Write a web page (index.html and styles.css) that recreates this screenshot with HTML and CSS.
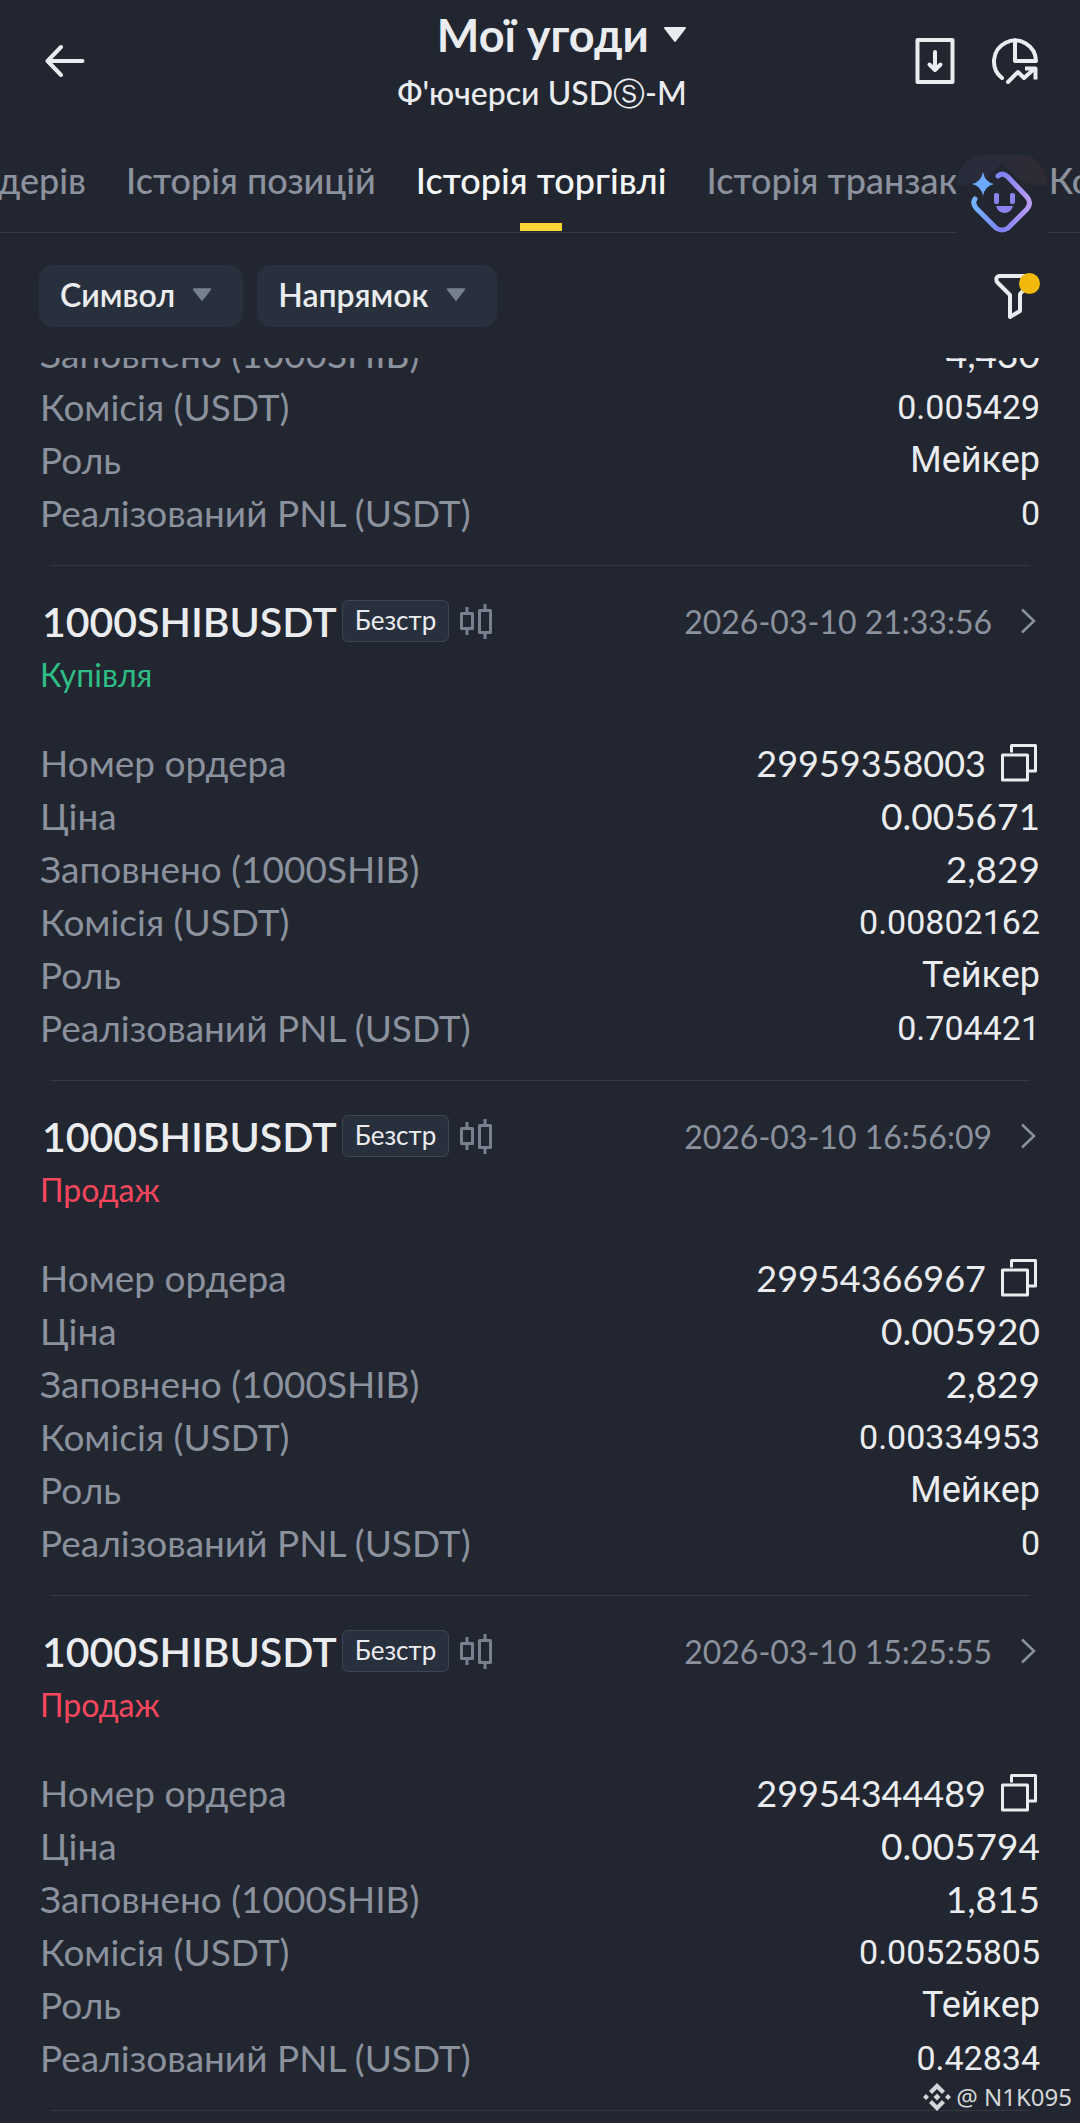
FILE: index.html
```html
<!DOCTYPE html>
<html lang="uk">
<head>
<meta charset="utf-8">
<meta name="viewport" content="width=device-width, initial-scale=1">
<title>Мої угоди</title>
<link rel="stylesheet" href="styles.css">
</head>
<body>
<svg class="sprite" aria-hidden="true">
  <symbol id="caret" viewBox="0 0 24 16"><path d="M2 1h20L12 14z" fill="currentColor" stroke="currentColor" stroke-width="2" stroke-linejoin="round"/></symbol>
  <symbol id="candles" viewBox="0 0 34 38"><g fill="none" stroke="currentColor" stroke-width="3" stroke-linejoin="round"><path d="M2.500 11.500h11v15h-11zM20.500 8.500h11v22h-11zM8 5v6M8 27v6M26 2v6M26 31v6"/></g></symbol>
  <symbol id="chevron" viewBox="0 0 16 26"><path d="M2 1.500L14 13 2 24.500" fill="none" stroke="currentColor" stroke-width="2.500"/></symbol>
  <symbol id="copy" viewBox="0 0 36 38"><g fill="none" stroke="currentColor" stroke-width="3" stroke-linejoin="round"><path d="M1.500 11h25v25h-25z"/><path d="M10.500 8.500v-7h24v25.500h-6.500"/></g></symbol>
</svg>
<div class="app">
  <header class="header">
    <button class="icon-button" type="button" aria-label="Назад">
      <svg width="40" height="34" viewBox="0 0 40 34"><path d="M37.500 17H3M16 3L2.500 17 16 31" fill="none" stroke="currentColor" stroke-width="4" stroke-linecap="round" stroke-linejoin="round"/></svg>
    </button>
    <div class="heading">
      <h1 class="heading-title"><button class="heading-button" type="button">Мої угоди <svg width="24" height="16"><use href="#caret"/></svg></button></h1>
      <p class="heading-sub">Ф'ючерси USDⓈ-M</p>
    </div>
    <div class="header-actions">
      <button class="icon-button" type="button" aria-label="Завантажити">
        <svg width="40" height="48" viewBox="0 0 40 48"><g fill="none" stroke="currentColor" stroke-width="4" stroke-linecap="round" stroke-linejoin="round"><path d="M2.500 3h35v42h-35z"/><path d="M20 15v18M14.500 27.500L20 33l5.500-5.500"/></g></svg>
      </button>
      <button class="icon-button" type="button" aria-label="Аналітика">
        <svg width="48" height="48" viewBox="0 0 48 48"><g fill="none" stroke="currentColor" stroke-width="4" stroke-linejoin="round"><path d="M11 41A21 21 0 1 1 45 24H24V3" stroke-linecap="round"/><path d="M17 45l10-10 6 6 10-9" stroke-linecap="round"/><path d="M34 31.500h10.500v11"/></g></svg>
      </button>
    </div>
  </header>

  <nav class="tabs" aria-label="Розділи">
    <a class="tab" href="#orders">Історія ордерів</a>
    <a class="tab" href="#positions">Історія позицій</a>
    <a class="tab tab-active" href="#trades" aria-current="page">Історія торгівлі</a>
    <a class="tab" href="#transactions">Історія транзакцій</a>
    <a class="tab" href="#copy-trading">Копітрейдинг</a>
  </nav>

  <button class="assistant" type="button" aria-label="Помічник">
    <svg width="92" height="88" viewBox="0 0 92 88">
      <defs>
        <linearGradient id="face" x1="0" y1="0" x2="1" y2="0"><stop offset="0" stop-color="#74b4fa"/><stop offset=".5" stop-color="#7f80f4"/><stop offset="1" stop-color="#b99cf2"/></linearGradient>
        <linearGradient id="cap" x1="0" y1="0" x2="1" y2="0"><stop offset="0" stop-color="#272c3a"/><stop offset=".5" stop-color="#2b2b3a"/><stop offset="1" stop-color="#2d2a32"/></linearGradient>
      </defs>
      <path d="M0 31C3 12 12 1 26 1H66C80 1 89 12 92 31Q75 33 62 25L46 9 30 25Q16 33 0 31z" fill="url(#cap)"/>
      <path d="M42 22Q47 18 52 23L71 43Q76 49 71 55L52 74Q46 78 40 74L20 54Q16 49 19 45" fill="none" stroke="url(#face)" stroke-width="5" stroke-linecap="round" stroke-linejoin="round"/>
      <path d="M27 18Q29 28 38 30Q29 32 27 42Q25 32 16 30Q25 28 27 18z" fill="#6aa9fb"/>
      <rect x="38" y="39" width="5" height="11" rx="2" fill="#8b82ee"/><rect x="54" y="39" width="5" height="11" rx="2" fill="#8b82ee"/>
      <path d="M40 52h17Q55 59 48.500 59T40 52z" fill="#8b82ee"/>
    </svg>
  </button>

  <div class="filters">
    <button class="chip" type="button">Символ <svg width="20" height="14"><use href="#caret"/></svg></button>
    <button class="chip" type="button">Напрямок <svg width="20" height="14"><use href="#caret"/></svg></button>
    <button class="icon-button filter-button" type="button" aria-label="Фільтр">
      <svg width="50" height="50" viewBox="0 0 50 50"><path d="M8 5H39Q43 6 40 11L29 23V40L19 46V24L6 11Q4 6 8 5z" fill="none" stroke="currentColor" stroke-width="4" stroke-linejoin="round"/><circle cx="38.500" cy="12.500" r="10.500" fill="#f0b90b"/></svg>
    </button>
  </div>

  <main class="list">
    <article class="card card-scrolled">
      <dl class="rows">
        <div class="row"><dt>Заповнено (1000SHIB)</dt><dd>4,430</dd></div>
        <div class="row"><dt>Комісія (USDT)</dt><dd class="narrow">0.005429</dd></div>
        <div class="row"><dt>Роль</dt><dd class="role">Мейкер</dd></div>
        <div class="row"><dt>Реалізований PNL (USDT)</dt><dd class="narrow">0</dd></div>
      </dl>
    </article>

    <article class="card">
      <div class="card-head">
        <h2 class="symbol">1000SHIBUSDT</h2><span class="badge">Безстр</span><svg class="candles" width="34" height="38"><use href="#candles"/></svg>
        <a class="details" href="#trade-1"><time datetime="2026-03-10T21:33:56">2026-03-10 21:33:56</time><svg width="16" height="26"><use href="#chevron"/></svg></a>
      </div>
      <p class="side side-buy">Купівля</p>
      <dl class="rows">
        <div class="row"><dt>Номер ордера</dt><dd class="order-id">29959358003 <button class="copy" type="button" aria-label="Копіювати"><svg width="36" height="38"><use href="#copy"/></svg></button></dd></div>
        <div class="row"><dt>Ціна</dt><dd>0.005671</dd></div>
        <div class="row"><dt>Заповнено (1000SHIB)</dt><dd>2,829</dd></div>
        <div class="row"><dt>Комісія (USDT)</dt><dd class="narrow">0.00802162</dd></div>
        <div class="row"><dt>Роль</dt><dd class="role">Тейкер</dd></div>
        <div class="row"><dt>Реалізований PNL (USDT)</dt><dd class="narrow">0.704421</dd></div>
      </dl>
    </article>

    <article class="card">
      <div class="card-head">
        <h2 class="symbol">1000SHIBUSDT</h2><span class="badge">Безстр</span><svg class="candles" width="34" height="38"><use href="#candles"/></svg>
        <a class="details" href="#trade-2"><time datetime="2026-03-10T16:56:09">2026-03-10 16:56:09</time><svg width="16" height="26"><use href="#chevron"/></svg></a>
      </div>
      <p class="side side-sell">Продаж</p>
      <dl class="rows">
        <div class="row"><dt>Номер ордера</dt><dd class="order-id">29954366967 <button class="copy" type="button" aria-label="Копіювати"><svg width="36" height="38"><use href="#copy"/></svg></button></dd></div>
        <div class="row"><dt>Ціна</dt><dd>0.005920</dd></div>
        <div class="row"><dt>Заповнено (1000SHIB)</dt><dd>2,829</dd></div>
        <div class="row"><dt>Комісія (USDT)</dt><dd class="narrow">0.00334953</dd></div>
        <div class="row"><dt>Роль</dt><dd class="role">Мейкер</dd></div>
        <div class="row"><dt>Реалізований PNL (USDT)</dt><dd class="narrow">0</dd></div>
      </dl>
    </article>

    <article class="card">
      <div class="card-head">
        <h2 class="symbol">1000SHIBUSDT</h2><span class="badge">Безстр</span><svg class="candles" width="34" height="38"><use href="#candles"/></svg>
        <a class="details" href="#trade-3"><time datetime="2026-03-10T15:25:55">2026-03-10 15:25:55</time><svg width="16" height="26"><use href="#chevron"/></svg></a>
      </div>
      <p class="side side-sell">Продаж</p>
      <dl class="rows">
        <div class="row"><dt>Номер ордера</dt><dd class="order-id">29954344489 <button class="copy" type="button" aria-label="Копіювати"><svg width="36" height="38"><use href="#copy"/></svg></button></dd></div>
        <div class="row"><dt>Ціна</dt><dd>0.005794</dd></div>
        <div class="row"><dt>Заповнено (1000SHIB)</dt><dd>1,815</dd></div>
        <div class="row"><dt>Комісія (USDT)</dt><dd class="narrow">0.00525805</dd></div>
        <div class="row"><dt>Роль</dt><dd class="role">Тейкер</dd></div>
        <div class="row"><dt>Реалізований PNL (USDT)</dt><dd class="narrow">0.42834</dd></div>
      </dl>
    </article>
  </main>

  <p class="watermark">
    <svg width="28" height="28" viewBox="0 0 28 28" aria-hidden="true"><path d="M14 0l8 8-3 3-5-5-5 5-3-3zM14 28l8-8-3-3-5 5-5-5-3 3zM3 11l3 3-3 3-3-3zM25 11l3 3-3 3-3-3zM14 10.500l3.500 3.500-3.500 3.500-3.500-3.500z" fill="currentColor"/></svg>
    @ N1K095
  </p>
</div>
</body>
</html>
```

FILE: styles.css
```css
* { box-sizing: border-box; }

body {
  margin: 0;
  background: #222630;
  color: #eaecef;
  font-family: Lato, Roboto, sans-serif;
  font-size: 36px;
}

h1, h2, p, dl, dd { margin: 0; }
svg { display: block; flex: none; }
.sprite { position: absolute; width: 0; height: 0; }

button {
  padding: 0;
  border: 0;
  background: none;
  color: inherit;
  font: inherit;
}

a { color: inherit; text-decoration: none; }

.app { position: relative; overflow: hidden; }

.header {
  display: grid;
  grid-template-columns: 1fr auto 1fr;
  align-items: center;
  height: 117px;
  padding: 0 41px 0 45px;
}

.icon-button { display: block; }
.heading { align-self: start; padding-top: 6px; text-align: center; }
.heading-title { font-size: 45px; font-weight: 700; line-height: 58px; }
.heading-button { display: flex; align-items: center; gap: 14px; margin-left: auto; }
.heading-sub { font-size: 32px; font-weight: 500; line-height: 58px; }
.header-actions { display: flex; justify-content: flex-end; gap: 36px; }

.tabs {
  display: flex;
  gap: 40px;
  height: 116px;
  padding-top: 36px;
  border-bottom: 1px solid #333843;
  white-space: nowrap;
  color: #8b919d;
  font-weight: 500;
}

.tab { position: relative; flex: none; line-height: 54px; }
.tab:first-child { margin-left: -163px; }
.tab-active { color: #f5f6f8; }

.tab-active::after {
  content: "";
  position: absolute;
  bottom: 1px;
  left: 50%;
  width: 42px;
  height: 8px;
  margin-left: -21px;
  background: #fcd535;
}

.assistant {
  position: absolute;
  top: 154px;
  right: 32px;
  background: #222630;
}

.filters {
  display: flex;
  align-items: center;
  gap: 14px;
  height: 125px;
  padding: 0 39px;
}

.chip {
  display: flex;
  align-items: center;
  gap: 17px;
  height: 62px;
  padding: 0 31px 2px 21px;
  border-radius: 14px;
  background: #29303d;
  font-size: 32px;
  font-weight: 600;
}

.chip svg { color: #76808f; }
.filter-button { margin-left: auto; }

.list { overflow: hidden; padding: 0 40px 12px; }
.card { position: relative; padding: 34px 0 27px; }
.card-scrolled { margin-top: -31px; padding-top: 0; }

.card::after {
  content: "";
  position: absolute;
  right: 10px;
  bottom: 0;
  left: 10px;
  height: 1px;
  background: #333843;
}

.card-head { display: flex; align-items: center; height: 42px; }
.symbol { padding-left: 2px; font-size: 41px; font-weight: 600; }

.badge {
  margin-left: 5px;
  padding: 0 12px 2px;
  border: 1px solid #3d4552;
  border-radius: 6px;
  background: #29303d;
  font-size: 26px;
  line-height: 38px;
}

.candles { margin-left: 10px; color: #76808f; }

.details {
  display: flex;
  align-items: center;
  gap: 28px;
  margin-left: auto;
  padding-right: 4px;
  color: #8b919d;
  font-size: 32px;
}

.side { margin: 15px 0 43px; font-size: 32px; line-height: 36px; }
.side-buy { color: #2ebd85; }
.side-sell { color: #f6465d; }

.row {
  display: flex;
  justify-content: space-between;
  align-items: center;
  height: 53px;
  font-size: 37px;
}

.row dt { color: #8b919d; }
.row dd { display: flex; align-items: center; gap: 15px; }
.row .order-id { font-size: 36px; }
.row .role { font-family: Roboto, sans-serif; font-size: 36px; }
.row .narrow { font-family: Roboto, sans-serif; font-size: 34px; }
.copy { padding-right: 3px; }

.watermark {
  position: absolute;
  right: 8px;
  bottom: 10px;
  display: flex;
  align-items: center;
  gap: 5px;
  font-family: "Noto Sans", sans-serif;
  font-size: 24px;
  color: #d5d6d9;
}
```
